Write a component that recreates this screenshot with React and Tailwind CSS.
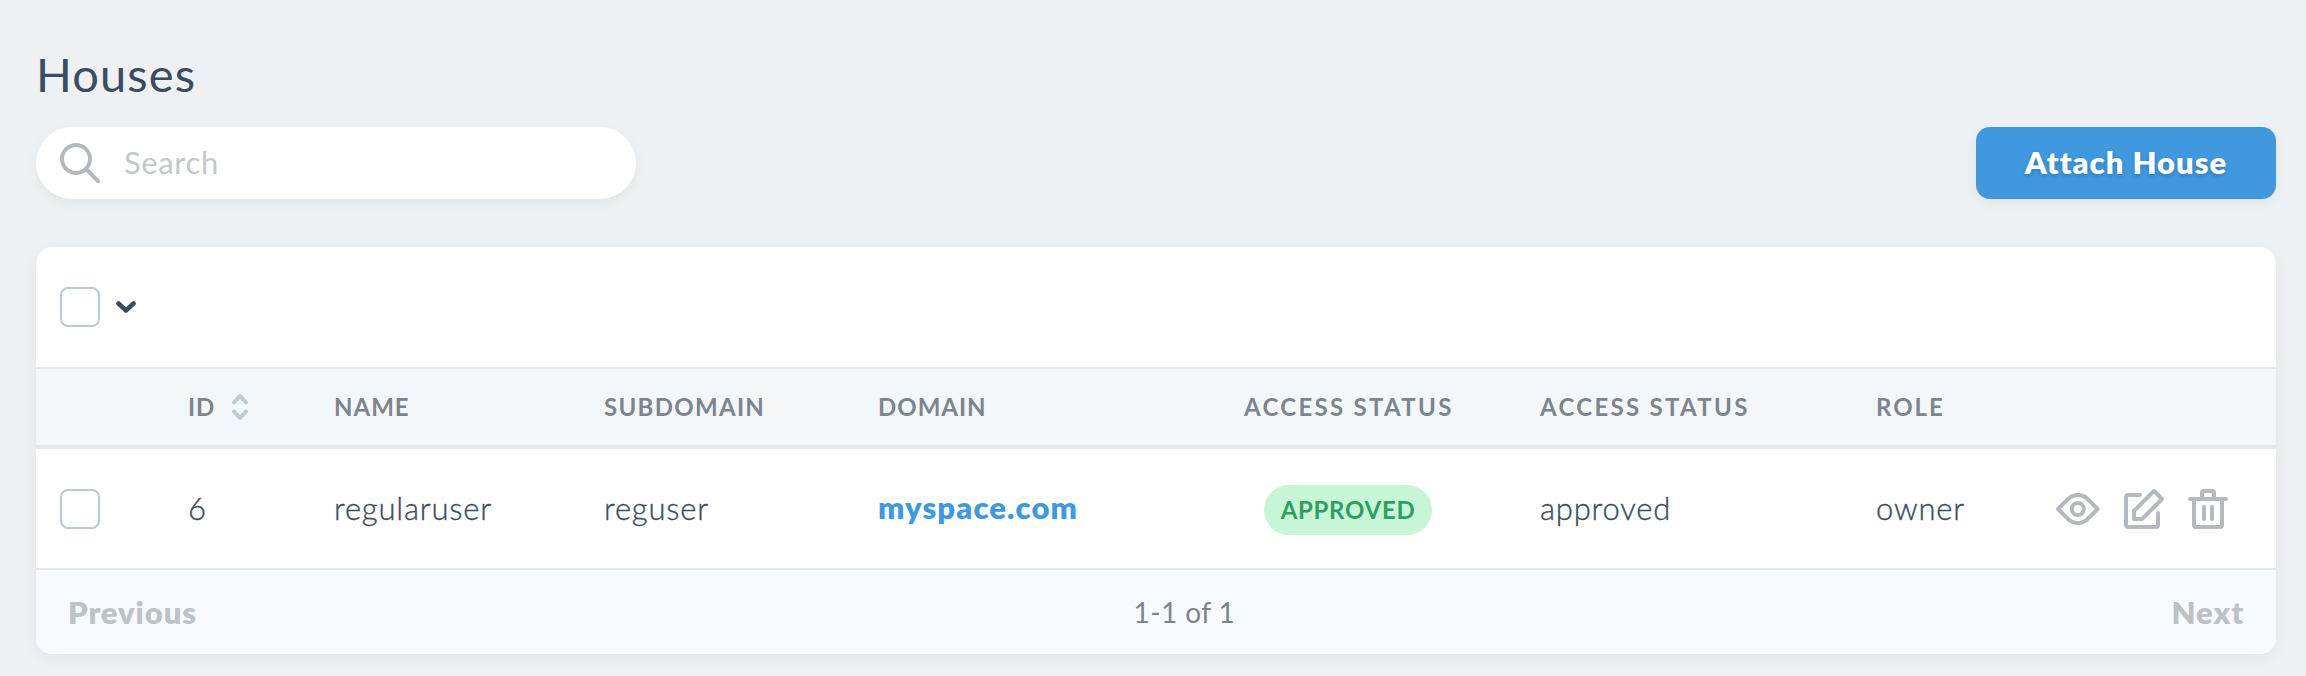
// App.jsx - Houses resource index
import React from 'react';

const FONT = "font-['Lato','Open_Sans',sans-serif]";

function SearchIcon() {
  return (
    <svg viewBox="0 0 20 20" className="w-[40px] h-[40px] fill-[#b3b9bf] shrink-0">
      <path d="M14.32 12.906l5.387 5.387a1 1 0 0 1-1.414 1.414l-5.387-5.387a8 8 0 1 1 1.414-1.414zM8 14A6 6 0 1 0 8 2a6 6 0 0 0 0 12z" />
    </svg>
  );
}

function ViewIcon() {
  return (
    <svg viewBox="0 0 22 16" className="w-[44px] h-[32px] fill-[#b3b9bf]">
      <path d="M16.56 13.66a8 8 0 0 1-11.32 0L.3 8.7a1 1 0 0 1 0-1.42l4.95-4.95a8 8 0 0 1 11.32 0l4.95 4.95a1 1 0 0 1 0 1.42l-4.95 4.95-.01.01zm-9.9-1.42a6 6 0 0 0 8.48 0L19.38 8l-4.24-4.24a6 6 0 0 0-8.48 0L2.42 8l4.24 4.24zM10.9 12a4 4 0 1 1 0-8 4 4 0 0 1 0 8zm0-2a2 2 0 1 0 0-4 2 2 0 0 0 0 4z" />
    </svg>
  );
}

function EditIcon() {
  return (
    <svg viewBox="0 0 20 20" className="w-[40px] h-[40px] fill-[#b3b9bf]">
      <path d="M4.3 10.3l10-10a1 1 0 0 1 1.4 0l4 4a1 1 0 0 1 0 1.4l-10 10a1 1 0 0 1-.7.3H5a1 1 0 0 1-1-1v-4a1 1 0 0 1 .3-.7zM6 14h2.59l9-9L15 2.41l-9 9V14zm10-2a1 1 0 0 1 2 0v6a2 2 0 0 1-2 2H2a2 2 0 0 1-2-2V4c0-1.1.9-2 2-2h6a1 1 0 1 1 0 2H2v14h14v-6z" />
    </svg>
  );
}

function DeleteIcon() {
  return (
    <svg viewBox="0 0 20 20" className="w-[40px] h-[40px] fill-[#b3b9bf]">
      <path d="M6 4V2a2 2 0 0 1 2-2h4a2 2 0 0 1 2 2v2h5a1 1 0 0 1 0 2h-1v12a2 2 0 0 1-2 2H4a2 2 0 0 1-2-2V6H1a1 1 0 1 1 0-2h5zM4 6v12h12V6H4zm8-2V2H8v2h4zM8 8a1 1 0 0 1 1 1v6a1 1 0 0 1-2 0V9a1 1 0 0 1 1-1zm4 0a1 1 0 0 1 1 1v6a1 1 0 0 1-2 0V9a1 1 0 0 1 1-1z" />
    </svg>
  );
}

function SortIcon() {
  return (
    <svg viewBox="0 0 16 28" className="w-[16px] h-[28px] fill-none stroke-[#bacad6] stroke-[4]">
      <path d="M2 9.5 L8 3 L14 9.5" strokeLinecap="round" strokeLinejoin="round" />
      <path d="M2 18.5 L8 25 L14 18.5" strokeLinecap="round" strokeLinejoin="round" />
    </svg>
  );
}

function Checkbox() {
  return <div className="w-[40px] h-[40px] rounded-[8px] border-2 border-[#bacad6] bg-white" />;
}

const columns = [
  { label: 'ID', width: 'w-[146px]', tracking: 'tracking-[0.8px]', sort: true },
  { label: 'NAME', width: 'w-[270px]', tracking: 'tracking-[1px]' },
  { label: 'SUBDOMAIN', width: 'w-[274px]', tracking: 'tracking-[1.3px]' },
  { label: 'DOMAIN', width: 'w-[366px]', tracking: 'tracking-[1px]' },
  { label: 'ACCESS STATUS', width: 'w-[296px]', tracking: 'tracking-[2.3px]' },
  { label: 'ACCESS STATUS', width: 'w-[336px]', tracking: 'tracking-[2.3px]' },
  { label: 'ROLE', width: 'w-[180px]', tracking: 'tracking-[2px]' },
];

export default function App() {
  return (
    <div className={`min-h-screen bg-[#eef1f4] pl-[36px] pr-[30px] pt-[36px] text-[#3c4b5f] ${FONT}`}>
      <h1 className="text-[47px] leading-[76px] font-normal text-[#3c4b5f] h-[76px] mb-[15px] tracking-[1.1px]">Houses</h1>

      {/* Search + create */}
      <div className="flex items-center justify-between mb-[48px]">
        <div className="w-[600px] h-[72px] bg-white rounded-full shadow-[0_4px_12px_rgba(0,0,0,0.05)] flex items-center pl-[24px] gap-[24px]">
          <SearchIcon />
          <span className="text-[31px] leading-[36px] -mt-[2px] text-[#c3c8cd] tracking-[0.6px]">Search</span>
        </div>
        <button className="w-[300px] h-[72px] pb-[2px] bg-[#4099de] rounded-[14px] text-white text-[31px] font-extrabold tracking-[1px] shadow-[0_4px_12px_rgba(0,0,0,0.05)] [text-shadow:0_2px_4px_rgba(0,0,0,0.2)]">
          Attach House
        </button>
      </div>

      {/* Resource table card */}
      <div className="bg-white rounded-[16px] shadow-[0_4px_16px_rgba(0,0,0,0.05)] overflow-hidden">
        <div className="h-[120px] flex items-center pl-[24px] gap-[16px]">
          <Checkbox />
          <svg viewBox="0 0 20 12" className="w-[20px] h-[12px] fill-none stroke-[#3c4b5f] stroke-[4.5]">
            <path d="M2.5 2.5 L10 9.5 L17.5 2.5" strokeLinecap="round" strokeLinejoin="round" />
          </svg>
        </div>

        <div className="h-[82px] flex items-center bg-[#f4f7fa] border-t-2 border-b-4 border-[#e3e7eb] text-[24px] font-bold text-[#7c858e]">
          <div className="w-[128px]" />
          {columns.map((col, idx) => (
            <div key={idx} className={`${col.width} ${col.tracking} pl-[24px] flex items-center gap-[17px]`}>
              {col.label}
              {col.sort && <SortIcon />}
            </div>
          ))}
        </div>

        <div className="h-[119px] flex items-center text-[31px] font-light tracking-[0.8px] [-webkit-text-stroke:0.35px_#3c4b5f]">
          <div className="w-[128px] pl-[24px]"><Checkbox /></div>
          <div className="w-[146px] pl-[24px]">6</div>
          <div className="w-[270px] pl-[24px]">regularuser</div>
          <div className="w-[274px] pl-[24px]">reguser</div>
          <div className="w-[366px] pl-[24px] font-extrabold text-[#4099de] tracking-[1.1px] -mt-[2px] [-webkit-text-stroke:0]">myspace.com</div>
          <div className="w-[296px] pl-[44px] [-webkit-text-stroke:0]">
            <span className="w-[168px] h-[50px] mt-[3px] rounded-full bg-[#c6f6d5] text-[#2f9e63] text-[24px] font-bold tracking-[0.7px] flex items-center justify-center">APPROVED</span>
          </div>
          <div className="w-[336px] pl-[24px]">approved</div>
          <div className="w-[180px] pl-[24px]">owner</div>
          <div className="flex items-center gap-[24px] ml-[24px]">
            <ViewIcon />
            <EditIcon />
            <DeleteIcon />
          </div>
        </div>

        <div className="h-[86px] flex items-center justify-between bg-[#f7fbff] border-t-2 border-[#e3e7eb] px-[32px] text-[31px] font-extrabold text-[#bcc2c8] tracking-[0.9px]">
          <span>Previous</span>
          <span className="text-[28px] font-normal text-[#7c858e] tracking-[0.4px]">1-1 of 1</span>
          <span>Next</span>
        </div>
      </div>
    </div>
  );
}
